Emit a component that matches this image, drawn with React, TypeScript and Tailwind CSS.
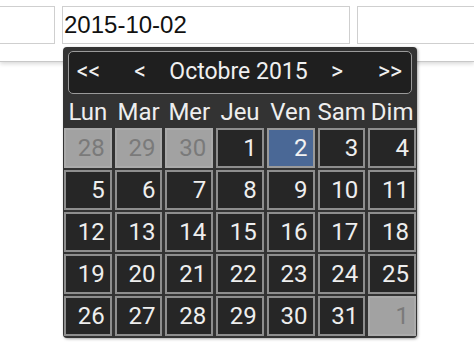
import React from "react";

const weekdays = ["Lun", "Mar", "Mer", "Jeu", "Ven", "Sam", "Dim"];

type Day = { n: number; other?: boolean; selected?: boolean };

const days: Day[] = [
  { n: 28, other: true },
  { n: 29, other: true },
  { n: 30, other: true },
  ...Array.from({ length: 31 }, (_, i) => ({ n: i + 1, selected: i + 1 === 2 })),
  { n: 1, other: true },
];

function Cell({ d }: { d: Day }) {
  let cls =
    "h-[40px] border-2 flex items-center justify-end pr-[5px] text-[24px] leading-none ";
  if (d.other) cls += "bg-[#a2a2a2] border-[#ababab] text-[#7a7a7a]";
  else if (d.selected) cls += "bg-[#4a6896] border-[#9a9a9a] text-[#f2f2f2]";
  else cls += "bg-[#262626] border-[#8e8e8e] text-[#eeeeee]";
  return <div className={cls}>{d.n}</div>;
}

export default function App() {
  return (
    <div className="relative w-[474px] h-[348px] bg-white overflow-hidden">
      <div className="h-[62px] bg-white border-b border-[#c8c8c8] shadow-[0_2px_4px_rgba(0,0,0,0.15)] pt-[6px]">
        <div className="flex gap-[7px] -ml-[10px]">
          <div className="w-[65px] h-[38px] border border-[#cfcfcf] bg-white shrink-0" />
          <div className="w-[288px] h-[38px] border border-[#cfcfcf] bg-white shrink-0 flex items-center pl-[1px] text-[24px] text-[#111] font-['Liberation_Sans',Arial,sans-serif]">
            2015-10-02
          </div>
          <div className="w-[288px] h-[38px] border border-[#cfcfcf] bg-white shrink-0" />
        </div>
      </div>

      <div className="absolute left-[63px] top-[47px] w-[354px] h-[291px] bg-[#333333] rounded-[4px] shadow-[1px_1px_3px_rgba(0,0,0,0.35)] pt-[4px] px-[1px] font-['Roboto',sans-serif] font-normal">
        <div className="mx-[4px] h-[43px] rounded-[5px] border border-[#9a9a9a] bg-[#1f1f1f] grid grid-cols-[39px_64px_minmax(0,1fr)_64px_42px] items-center text-[23px] text-[#f0f0f0] whitespace-nowrap">
          <span className="text-center">&lt;&lt;</span>
          <span className="text-center">&lt;</span>
          <span className="flex justify-center">Octobre 2015</span>
          <span className="text-center">&gt;</span>
          <span className="text-center">&gt;&gt;</span>
        </div>
        <div className="grid grid-cols-7 gap-x-[3px] h-[34px] items-center text-[24px] text-[#eeeeee]">
          {weekdays.map((w) => (
            <div key={w} className="text-center leading-none pt-[2px]">
              {w}
            </div>
          ))}
        </div>
        <div className="grid grid-cols-7 gap-x-[3px] gap-y-[2px]">
          {days.map((d, i) => (
            <Cell key={i} d={d} />
          ))}
        </div>
      </div>
    </div>
  );
}
